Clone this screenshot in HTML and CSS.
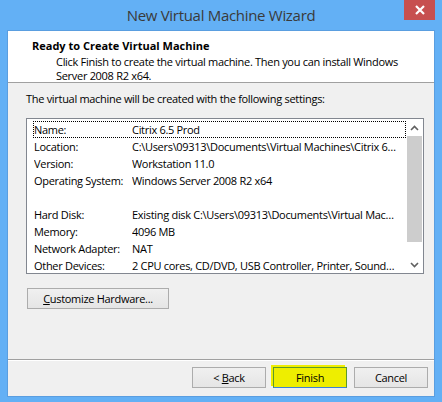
FILE: index.html
```html
<!DOCTYPE html>
<html>
<head>
<meta charset="utf-8">
<link rel="stylesheet" href="styles.css">
</head>
<body>
<div class="window">
  <div class="titlebar">
    <span class="spacer"></span>
    <div class="title">New Virtual Machine Wizard</div>
    <div class="close-col">
      <div class="close">
        <svg width="10" height="10" viewBox="0 0 10 10"><path d="M1 1 L9 9 M9 1 L1 9" stroke="#fff" stroke-width="2.2" fill="none"/></svg>
      </div>
    </div>
  </div>
  <div class="client">
    <div class="header">
      <div class="h-title">Ready to Create Virtual Machine</div>
      <div class="h-sub">Click Finish to create the virtual machine. Then you can install Windows<br>Server 2008 R2 x64.</div>
    </div>
    <div class="body">
      <div class="intro">The virtual machine will be created with the following settings:</div>
      <div class="listbox">
        <div class="rows">
          <div class="row focus"><span class="lbl">Name:</span><span class="val">Citrix 6.5 Prod</span></div>
          <div class="row"><span class="lbl">Location:</span><span class="val">C:\Users\09313\Documents\Virtual Machines\Citrix 6…</span></div>
          <div class="row"><span class="lbl">Version:</span><span class="val">Workstation 11.0</span></div>
          <div class="row"><span class="lbl">Operating System:</span><span class="val">Windows Server 2008 R2 x64</span></div>
          <div class="row"><span class="lbl"></span><span class="val"></span></div>
          <div class="row"><span class="lbl">Hard Disk:</span><span class="val">Existing disk C:\Users\09313\Documents\Virtual Mac…</span></div>
          <div class="row"><span class="lbl">Memory:</span><span class="val">4096 MB</span></div>
          <div class="row"><span class="lbl">Network Adapter:</span><span class="val">NAT</span></div>
          <div class="row"><span class="lbl">Other Devices:</span><span class="val">2 CPU cores, CD/DVD, USB Controller, Printer, Sound…</span></div>
        </div>
        <div class="scrollbar">
          <div class="arrow">
            <svg width="9" height="6" viewBox="0 0 9 6"><path d="M1 5 L4.5 1.5 L8 5" stroke="#606060" stroke-width="1.6" fill="none"/></svg>
          </div>
          <div class="thumb"></div>
          <div class="track"></div>
          <div class="arrow">
            <svg width="9" height="6" viewBox="0 0 9 6"><path d="M1 1 L4.5 4.5 L8 1" stroke="#606060" stroke-width="1.6" fill="none"/></svg>
          </div>
        </div>
      </div>
      <div class="custom-row">
        <button class="btn custom"><u>C</u>ustomize Hardware...</button>
      </div>
    </div>
    <div class="footer">
      <button class="btn"><span>&lt; <u>B</u>ack</span></button>
      <button class="btn finish">Finish</button>
      <button class="btn">Cancel</button>
    </div>
  </div>
</div>
</body>
</html>
```

FILE: styles.css
```css
html, body {
  margin: 0;
  padding: 0;
}
body {
  width: 442px;
  height: 402px;
  overflow: hidden;
  font-family: "Open Sans", "Noto Sans", sans-serif;
  font-size: 11px;
  letter-spacing: -0.3px;
  color: #000;
}
.window {
  width: 442px;
  height: 402px;
  background: #63b0f5;
  display: flex;
  flex-direction: column;
  box-sizing: border-box;
}
.titlebar {
  height: 30px;
  display: grid;
  grid-template-columns: 1fr auto 1fr;
  align-items: start;
  flex: none;
}
.title {
  font-size: 15px;
  color: #3a3a3a;
  line-height: 30px;
  letter-spacing: -0.3px;
}
.close-col {
  display: flex;
  justify-content: flex-end;
}
.close {
  width: 31px;
  height: 20px;
  margin-right: 7px;
  background: #c75050;
  display: flex;
  align-items: center;
  justify-content: center;
}
.close svg {
  display: block;
}
.client {
  flex: 1;
  margin: 0 7px 5px 7px;
  border: 1px solid #5a9ee0;
  background: #f0f0f0;
  display: flex;
  flex-direction: column;
}
.header {
  background: #fff;
  border-bottom: 1px solid #a0a0a0;
  padding: 7px 0 0 24px;
  box-sizing: content-box;
  flex: none;
  height: 44px;
}
.h-title {
  font-weight: bold;
  line-height: 16px;
  letter-spacing: 0;
}
.h-sub {
  padding-left: 24px;
  line-height: 14px;
  margin-top: 1px;
}
.body {
  flex: 1;
  padding: 8px 0 0 18px;
  display: flex;
  flex-direction: column;
}
.intro {
  line-height: 15px;
}
.listbox {
  margin-top: 12px;
  width: 398px;
  height: 156px;
  box-sizing: border-box;
  border: 1px solid #828790;
  background: #fff;
  display: flex;
  overflow: hidden;
}
.rows {
  flex: 1;
  padding: 2px 0 0 6px;
  min-width: 0;
}
.row {
  height: 17px;
  box-sizing: border-box;
  border: 1px solid transparent;
  display: grid;
  grid-template-columns: 98px 1fr;
  line-height: 15px;
  white-space: nowrap;
  overflow: hidden;
}
.row.focus {
  border: 1px dotted #000;
}
.val {
  overflow: hidden;
}
.scrollbar {
  width: 17px;
  flex: none;
  display: flex;
  flex-direction: column;
  background: #fff;
}
.arrow {
  height: 17px;
  display: flex;
  align-items: center;
  justify-content: center;
  flex: none;
}
.thumb {
  height: 106px;
  margin: 0 1px;
  background: #cdcdcd;
  flex: none;
}
.track {
  flex: 1;
}
.custom-row {
  margin-top: 14px;
  display: flex;
}
.btn {
  font-family: inherit;
  font-size: 11px;
  letter-spacing: -0.3px;
  color: #000;
  height: 21px;
  padding: 0;
  margin: 0;
  border: 1px solid #acacac;
  background: linear-gradient(#f0f0f0, #e5e5e5);
  box-sizing: border-box;
  line-height: 17px;
}
.custom {
  width: 142px;
  margin-left: 1px;
}
.footer {
  flex: none;
  border-top: 1px solid #a0a0a0;
  box-shadow: inset 0 1px 0 #fff;
  padding: 7px 6px 8px 0;
  display: flex;
  justify-content: flex-end;
  gap: 7px;
}
.footer .btn {
  width: 74px;
}
.btn.finish {
  background: #eeee00;
  border: 1px solid #5e9a2a;
  border-bottom-color: #3d82d6;
  box-shadow: -2px -2px 0 #eeee00;
}
```
